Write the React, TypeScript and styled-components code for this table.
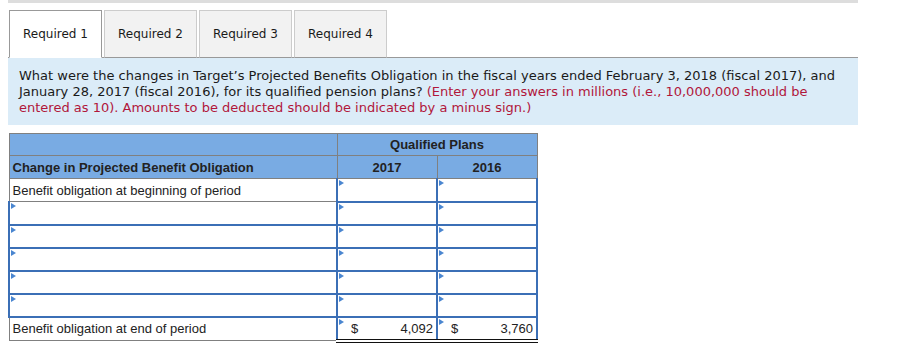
import React from "react";
import styled, { createGlobalStyle } from "styled-components";

const GlobalStyle = createGlobalStyle`
  body {
    margin: 0;
    background: #ffffff;
  }
`;

const Page = styled.div`
  width: 850px;
  padding: 0 8px;
`;

const TopRule = styled.div`
  height: 3px;
  background: #dddddd;
`;

const TabRow = styled.div`
  display: flex;
  gap: 2px;
  margin-top: 7px;
  padding-left: 1px;
  border-bottom: 1px solid #999999;
`;

const Tab = styled.div<{ $active?: boolean }>`
  box-sizing: border-box;
  width: 93px;
  height: 48px;
  margin-bottom: -1px;
  display: flex;
  align-items: center;
  justify-content: center;
  padding-bottom: 1px;
  font-family: "DejaVu Sans", Verdana, sans-serif;
  font-size: 12px;
  color: #1a1a1a;
  background: ${(p) => (p.$active ? "#ffffff" : "#f2f2f2")};
  border: 1px solid ${(p) => (p.$active ? "#999999" : "#cccccc")};
  border-bottom: 1px solid ${(p) => (p.$active ? "#ffffff" : "#999999")};
`;

const Prompt = styled.div`
  background: #dbecf8;
  padding: 10px 16px 9px 11px;
  font-family: "DejaVu Sans", Verdana, sans-serif;
  font-size: 13px;
  line-height: 16px;
  color: #1a1a1a;
`;

const Hint = styled.span`
  color: #b1173b;
`;

const Grid = styled.table`
  margin-top: 8px;
  border-collapse: collapse;
  width: 528px;
  table-layout: fixed;
  font-family: "Liberation Sans", Arial, sans-serif;
  font-size: 13px;
  color: #222222;
`;

const Head = styled.th<{ $align?: "left" | "center"; $tall?: boolean }>`
  background: #79abe3;
  border: 1px solid #808080;
  height: ${(p) => (p.$tall ? 22 : 21)}px;
  padding: 0 3px;
  font-weight: bold;
  text-align: ${(p) => p.$align ?? "center"};
  white-space: nowrap;
`;

const Label = styled.td`
  border: 1px solid #808080;
  height: 22px;
  padding: 0 3px;
  white-space: nowrap;
`;

// editable cell: blue frame with the little entry marker in its corner
const Entry = styled.td<{ $total?: boolean }>`
  position: relative;
  height: 21px;
  padding: 0 3px;
  background: #ffffff;
  border: 2px solid #3b6fb6;
  border-top: ${(p) => (p.$total ? "2px solid #1e2c44" : "1px solid #3b6fb6")};
  ${(p) => (p.$total ? "border-bottom: 4px double #111111;" : "")}

  &::before {
    content: "";
    position: absolute;
    top: 1px;
    left: 1px;
    border-left: 5px solid #4a86d0;
    border-top: 3px solid transparent;
    border-bottom: 3px solid transparent;
  }
`;

const Amount = styled.div`
  display: flex;
  justify-content: space-between;
  padding-left: 10px;
`;

const years = ["2017", "2016"];
const blankRows = 5;

export default function App() {
  return (
    <Page>
      <GlobalStyle />
      <TopRule />
      <TabRow>
        <Tab $active>Required 1</Tab>
        <Tab>Required 2</Tab>
        <Tab>Required 3</Tab>
        <Tab>Required 4</Tab>
      </TabRow>
      <Prompt>
        What were the changes in Target’s Projected Benefits Obligation in the
        fiscal years ended February 3, 2018 (fiscal 2017), and January 28, 2017
        (fiscal 2016), for its qualified pension plans?{" "}
        <Hint>
          (Enter your answers in millions (i.e., 10,000,000 should be entered
          as 10). Amounts to be deducted should be indicated by a minus sign.)
        </Hint>
      </Prompt>
      <Grid>
        <colgroup>
          <col style={{ width: 328 }} />
          <col style={{ width: 100 }} />
          <col style={{ width: 100 }} />
        </colgroup>
        <thead>
          <tr>
            <Head />
            <Head colSpan={2}>Qualified Plans</Head>
          </tr>
          <tr>
            <Head $align="left" $tall>
              Change in Projected Benefit Obligation
            </Head>
            {years.map((y) => (
              <Head key={y} $tall>
                {y}
              </Head>
            ))}
          </tr>
        </thead>
        <tbody>
          <tr>
            <Label>Benefit obligation at beginning of period</Label>
            <Entry />
            <Entry />
          </tr>
          {Array.from({ length: blankRows }, (_, i) => (
            <tr key={i}>
              <Entry />
              <Entry />
              <Entry />
            </tr>
          ))}
          <tr>
            <Label>Benefit obligation at end of period</Label>
            <Entry $total>
              <Amount>
                <span>$</span>
                <span>4,092</span>
              </Amount>
            </Entry>
            <Entry $total>
              <Amount>
                <span>$</span>
                <span>3,760</span>
              </Amount>
            </Entry>
          </tr>
        </tbody>
      </Grid>
    </Page>
  );
}
